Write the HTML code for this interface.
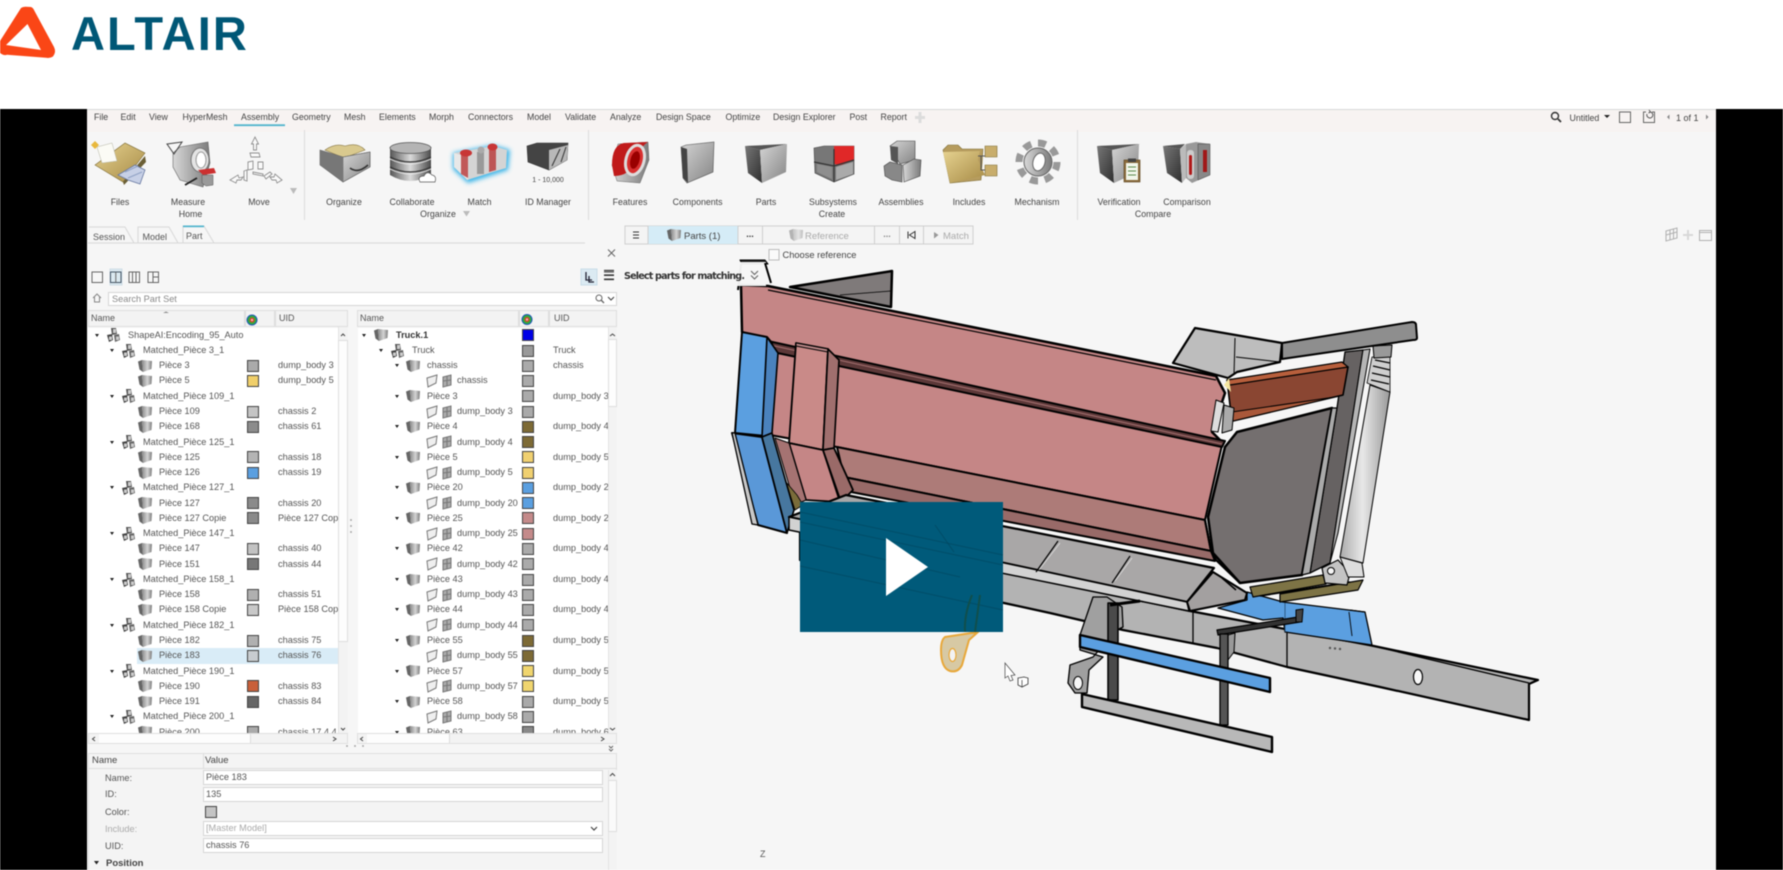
<!DOCTYPE html>
<html><head><meta charset="utf-8">
<style>
html,body{margin:0;padding:0;width:1783px;height:870px;overflow:hidden;background:#fff}
*{box-sizing:border-box}
body{font-family:"Liberation Sans",sans-serif;position:relative}
.abs{position:absolute}
#app{position:absolute;left:0;top:109px;width:1783px;height:761px;background:#000;overflow:hidden}
#inner{position:absolute;left:87px;top:0;width:1629px;height:761px;background:#f6f6f6;border-top:1px solid #d8d8d8}
#fx{position:absolute;left:0;top:0;width:1783px;height:870px;filter:blur(.4px)}
svg text{font-family:"Liberation Sans",sans-serif}
.m text{font-size:8.8px;fill:#444}
.lb text{font-size:8.8px;fill:#444;text-anchor:middle}
.hd{position:absolute;background:#f3f3f3;border:1px solid #dedede;font-size:9px;color:#555;line-height:15px;padding-left:2px;height:17px;top:310px}
.tree{position:absolute;top:327.67px;height:405px;background:#fff;overflow:hidden}
.r{position:relative;height:15.27px;font-size:9.2px;line-height:15.27px;color:#555;white-space:nowrap}
.r svg{position:absolute;width:14px;height:14px;top:.6px}
.r b{position:absolute;font-weight:normal;top:0}
.r s{position:absolute;width:12px;height:12px;top:1.6px;border:1px solid #444;text-decoration:none}
.r u{position:absolute;text-decoration:none;top:0;overflow:hidden}
.r.a::before{content:"";position:absolute;top:6px;border-left:2.5px solid transparent;border-right:2.5px solid transparent;border-top:3.5px solid #222}
#lt{left:88px;width:250px}
#lt .l0::before{left:7px}#lt .l0 svg{left:19px}#lt .l0 b{left:40px}
#lt .l1::before{left:22px}#lt .l1 svg{left:34px}#lt .l1 b{left:55px}
#lt .l2 svg{left:50px}#lt .l2 b{left:71px}
#lt s{left:159px}#lt u{left:190px}
#lt .sel{background:linear-gradient(90deg,#fff 49px,#d9ecf7 49px)}
#rt{left:358px;width:250px}
#rt .l0::before{left:4px}#rt .l0 svg{left:16px}#rt .l0 b{left:38px;font-weight:bold;color:#333}
#rt .l1::before{left:21px}#rt .l1 svg{left:33px}#rt .l1 b{left:54px}
#rt .l2::before{left:37px}#rt .l2 svg{left:48px}#rt .l2 b{left:69px}
#rt .l3 svg.p1{left:67px}#rt .l3 svg.p2{left:82px}#rt .l3 b{left:99px}
#rt s{left:164px}#rt u{left:195px;width:55px}
.fld{position:absolute;left:203px;width:400px;height:15px;background:#fff;border:1px solid #d6d6d6;font-size:9.2px;line-height:13px;padding-left:2px;color:#555}
.pl{position:absolute;left:105px;font-size:9.2px;color:#555}
</style></head>
<body>
<div id="fx">
<svg class="abs" style="left:0;top:0" width="260" height="70" viewBox="0 0 260 70">
<path fill="#fa4616" fill-rule="evenodd" d="M21 8Q23 6.500 26 6.800L31 7Q33 7.500 34.500 11L54 47Q56.500 52 53 56.500Q50 58.500 46 57.800L7 54.800Q4 56 0 53L0 41ZM27.500 24L6 45L41 50Z"/>
<text x="71" y="50" font-size="47" font-weight="bold" fill="#005776" letter-spacing="2.1">ALTAIR</text>
</svg>
<div id="app">
<div id="inner"></div>
</div>
<svg class="abs" style="left:0;top:0" width="1783" height="870" viewBox="0 0 1783 870">
<defs>
<linearGradient id="g1" x1="0" x2="1" y1="0" y2="0"><stop offset="0" stop-color="#d8d8d8"/><stop offset="1" stop-color="#7a7a7a"/></linearGradient>
<linearGradient id="g2" x1="0" x2="1" y1="0" y2="1"><stop offset="0" stop-color="#777"/><stop offset="1" stop-color="#2e2e2e"/></linearGradient>
<linearGradient id="g3" x1="0" x2="1" y1="0" y2="1"><stop offset="0" stop-color="#d4d4d4"/><stop offset="1" stop-color="#858585"/></linearGradient>
<linearGradient id="g4" x1="0" x2="1" y1="0" y2="0"><stop offset="0" stop-color="#555"/><stop offset=".5" stop-color="#dadada"/><stop offset="1" stop-color="#4a4a4a"/></linearGradient>
<linearGradient id="gc" x1="0" x2="1" y1="0" y2="0"><stop offset="0" stop-color="#8a8a8a"/><stop offset=".55" stop-color="#d4d4d4"/><stop offset="1" stop-color="#7c7c7c"/></linearGradient>
<linearGradient id="cyl" x1="0" x2="1" y1="0" y2="0"><stop offset="0" stop-color="#aaa"/><stop offset=".45" stop-color="#e8e8e8"/><stop offset="1" stop-color="#999"/></linearGradient>
<linearGradient id="gold" x1="0" x2="1" y1="0" y2="1"><stop offset="0" stop-color="#e6d290"/><stop offset="1" stop-color="#a68a45"/></linearGradient>
<radialGradient id="wheel"><stop offset="0" stop-color="#fff"/><stop offset=".3" stop-color="#e03030"/><stop offset=".6" stop-color="#28c028"/><stop offset="1" stop-color="#2040d0"/></radialGradient>
<filter id="glow" x="-30%" y="-30%" width="160%" height="160%"><feGaussianBlur stdDeviation="2.500"/></filter>
<symbol id="cube" viewBox="0 0 14 14"><path fill="#666" d="M0 2.500L4 1L5 13L1.500 10.500Z"/><path fill="url(#gc)" d="M4 1L14 2L13.500 10L5 13Z"/></symbol>
<symbol id="asm" viewBox="0 0 14 14"><path fill="#555" d="M4 0L9 0L10 6L5 7Z"/><path fill="#444" d="M0 7L5 6L6 12L2 14Z"/><path fill="#666" d="M7 7L12 6L13 12L8 14Z"/><path fill="#ccc" d="M6 1H9V5H6ZM2 8.500H5V12H2ZM9 8.500H12V12H9Z"/></symbol>
<symbol id="p1" viewBox="0 0 14 14"><path fill="#efefef" stroke="#777" d="M2 4L12 1L11 9L3 13Z"/></symbol>
<symbol id="p2" viewBox="0 0 14 14"><path fill="#aaa" stroke="#777" d="M3 3L11 1V11L3 13Z"/><path stroke="#777" fill="none" d="M3 7L11 6M7 2V12"/></symbol>
</defs>

<!-- menu -->
<rect x="87" y="110" width="1629" height="22" fill="#f7f3f2"/>
<rect x="234" y="124.300" width="51" height="1.800" fill="#4fb3cc"/>
<g class="m">
<text x="94" y="120">File</text><text x="120.500" y="120">Edit</text><text x="149" y="120">View</text><text x="182.500" y="120">HyperMesh</text><text x="241" y="120">Assembly</text><text x="292" y="120">Geometry</text><text x="344" y="120">Mesh</text><text x="379" y="120">Elements</text><text x="429" y="120">Morph</text><text x="468" y="120">Connectors</text><text x="527" y="120">Model</text><text x="565" y="120">Validate</text><text x="610" y="120">Analyze</text><text x="656" y="120">Design Space</text><text x="725.500" y="120">Optimize</text><text x="773" y="120">Design Explorer</text><text x="849.500" y="120">Post</text><text x="880.500" y="120">Report</text>
</g>
<path d="M920 112V123M915 117.500H925" stroke="#dcdcdc" stroke-width="3"/>
<!-- right menu -->
<circle cx="1555" cy="116" r="3.500" fill="none" stroke="#333" stroke-width="1.400"/><path d="M1558 119L1561 122" stroke="#333" stroke-width="1.800"/>
<text x="1569.500" y="121" font-size="8.800" fill="#444">Untitled</text>
<path d="M1604 115H1610L1607 118Z" fill="#222"/>
<rect x="1619.500" y="112" width="11" height="10.500" fill="none" stroke="#666"/>
<path d="M1646 112H1643.500V122.500H1654.500V112H1652" fill="none" stroke="#666"/><path d="M1647 114A3 3 0 1 0 1650 112M1649 110L1650.500 112L1648.500 113" fill="none" stroke="#555"/>
<path d="M1669.500 114.500V119.500L1667 117Z" fill="#888"/>
<text x="1676" y="121" font-size="9" fill="#444">1 of 1</text>
<path d="M1706 114.500V119.500L1708.500 117Z" fill="#888"/>

<!-- separators -->
<path d="M304.500 130V220M588.500 130V220M1077.500 130V220" stroke="#dcdcdc"/>

<!-- Files -->
<path d="M95 165L125 143L145 153L123 182Z" fill="url(#gold)" stroke="#7d6c34" stroke-width=".6"/>
<path d="M123 182L145 156L146 162L124 185Z" fill="#6b5f35"/>
<path d="M97 147L112 143L117 161L102 163Z" fill="#fbfbf5" stroke="#b5b5a5" stroke-width=".5"/>
<path d="M95 141L99 145L95 149L91 145Z" fill="#e8b83c"/>
<path d="M118 175L135 165L145 170L140 184L128 180Z" fill="#c7d0e6" stroke="#6677a0" stroke-width=".8"/>
<path d="M125 172L138 166M128 178L142 172" stroke="#8fa0c4" stroke-width="1"/>
<!-- Measure -->
<path d="M173 153L180 147L208 142L210 163L203 187L180 180L173 167Z" fill="url(#g1)" stroke="#666" stroke-width=".6"/>
<path d="M167 144L182 142L174 154Z" fill="none" stroke="#444"/>
<ellipse cx="200" cy="160" rx="9" ry="12" fill="#e4e4e4" stroke="#777"/><ellipse cx="201" cy="160" rx="5" ry="8" fill="#fff" stroke="#999"/>
<path d="M198 170L214 168L216 173L203 175Z" fill="#cc3030"/><path d="M202 175H213V185L206 186L202 183Z" fill="#9a9a9a" stroke="#555" stroke-width=".5"/>
<path d="M185 185L197 178" stroke="#222" stroke-width="1.800"/>
<!-- Move -->
<g fill="#fafafa" stroke="#8e8e8e" stroke-width=".9">
<path d="M253.500 150V144H251.500L255 137L258.500 144H256.500V150Z"/>
<path d="M250 153H259L260 157H251Z"/><path d="M258 162H263V169H258Z"/><path d="M248 162L253 161V169L248 170Z"/>
<path d="M244 171L247 170L247 181L244 180Z"/><path d="M253 172L263 174L263 176L253 174Z"/><path d="M264 176L270 172L272 174L266 179Z"/>
<path d="M230 180L238 175L239 178L243 177L241 180L237 180L236 183Z"/><path d="M282 180L275 174L274 177L270 177L272 180L276 180L277 183Z"/>
</g>
<path d="M290 188H297L293.500 194Z" fill="#bbb"/>
<!-- Organize -->
<path d="M325 150Q335 143 345 146Q358 142 365 150L344 158Z" fill="#d9c98e" stroke="#8a7a4a" stroke-width=".6"/>
<path d="M320 150L343 157L370 152L370 167L343 182L320 165Z" fill="url(#g1)" stroke="#555" stroke-width=".6"/>
<path d="M343 157L370 152V167L343 182Z" fill="url(#g3)" stroke="#555" stroke-width=".5"/>
<path d="M320 150L343 157V182L320 165Z" fill="#777"/>
<path d="M350 168Q358 174 368 165" fill="none" stroke="#333" stroke-width="1.600"/>
<!-- Collaborate -->
<path d="M390 148V175Q410 187 431 175V148Z" fill="url(#g4)"/>
<ellipse cx="410.500" cy="148" rx="20.500" ry="5.500" fill="#b4b4b4" stroke="#555" stroke-width=".8"/>
<path d="M390 157Q410 167 431 157M390 167Q410 177 431 167" fill="none" stroke="#333" stroke-width="1.200"/>
<path d="M390 159Q410 169 431 159M390 169Q410 179 431 169" fill="none" stroke="#eee" stroke-width=".8"/>
<path d="M420 182Q417 176 424 176Q427 170 432 175Q437 176 435 182Z" fill="#fff" stroke="#555" stroke-width=".7"/>
<!-- Match -->
<path d="M453 153L493 145L510 150L508 170L468 183L453 169Z" fill="#38b4e8" filter="url(#glow)"/>
<path d="M454 153L493 146L507 150L506 168L467 180L454 167Z" fill="#d4d4d4"/>
<path d="M454 153L468 157V180L454 167Z" fill="#e8e8e8"/>
<path d="M461 155H468V178L461 174ZM489 149H496V170L489 172Z" fill="#b73535" opacity=".8"/>
<path d="M477 152H484V174H477Z" fill="#999"/>
<ellipse cx="466" cy="153" rx="6" ry="3.500" fill="#c83636"/><ellipse cx="492.500" cy="147" rx="5" ry="3.500" fill="#c83636"/><circle cx="481" cy="150" r="3.500" fill="#aaa"/>
<!-- ID -->
<path d="M527 146L537 143H568L567 160L549 170L528 162Z" fill="#444" stroke="#333" stroke-width=".6"/>
<path d="M549 150L568 145L567 160L549 170Z" fill="#b8b8b8"/>
<path d="M552 166L560 149M561 162L566 147" stroke="#333"/>
<text x="548" y="182" font-size="7" fill="#444" text-anchor="middle">1 - 10,000</text>

<!-- Features -->
<path d="M618 144L648 142L649 160L640 183L617 181L612 165Z" fill="url(#g1)" stroke="#666" stroke-width=".5"/>
<path d="M612 165Q612 145 624 143L648 142Q640 147 636 160Q630 176 614 176Z" fill="#c01a1a"/>
<ellipse cx="635" cy="160" rx="9" ry="15" transform="rotate(15 635 160)" fill="#d83030" stroke="#ddd" stroke-width="3"/><ellipse cx="635" cy="160" rx="4.500" ry="9" transform="rotate(15 635 160)" fill="#900"/>
<!-- Components -->
<path d="M681 147L686 145L714 142L713 172L687 183L683 178Z" fill="url(#g3)" stroke="#555" stroke-width=".6"/>
<path d="M681 147L687 149L688 183L683 178Z" fill="#444"/>
<!-- Parts -->
<path d="M745 146L760 150L762 183L748 173Z" fill="url(#g2)"/>
<path d="M745 146L787 144L760 150Z" fill="#555"/>
<path d="M760 150L787 144L786 172L762 183Z" fill="url(#g3)"/>
<!-- Subsystems -->
<path d="M814 148L824 146H854L854 174L834 182L815 173Z" fill="#777" stroke="#444" stroke-width=".6"/>
<path d="M834 146H854V160L841 165L834 164Z" fill="#e02828"/>
<path d="M836 167L853 162V174L836 180Z" fill="#aaa"/><path d="M817 164L832 167V179L817 172Z" fill="#8e8e8e"/>
<path d="M834 149V182M814 162L834 166L854 160" stroke="#333" stroke-width="1.200" fill="none"/>
<!-- Assemblies -->
<path d="M890 146L897 141H915L915 160L900 164Z" fill="url(#g3)" stroke="#444" stroke-width=".6"/><path d="M890 146L898 147V164L891 160Z" fill="#555"/>
<path d="M884 166L890 162L902 165V182L892 180L885 176Z" fill="#888" stroke="#444" stroke-width=".6"/>
<path d="M903 165L914 159L921 160L920 176L904 182Z" fill="url(#g1)" stroke="#444" stroke-width=".6"/>
<!-- Includes -->
<path d="M943 150L948 145L958 145L962 149L983 149L981 180L950 183Z" fill="#b69c5e" stroke="#7d6c34" stroke-width=".6"/>
<path d="M943 152L980 151L978 160L985 175L950 183Z" fill="url(#gold)"/>
<path d="M985 146H997V157H985ZM985 165H997V176H985Z" fill="#c8ad6c" stroke="#7d6c34" stroke-width=".6"/><path d="M978 156H985M981 156V170H985" stroke="#555" fill="none"/>
<!-- Mechanism -->
<circle cx="1038" cy="162" r="14" fill="url(#g1)" stroke="#666" stroke-width="1"/>
<circle cx="1038" cy="162" r="19" fill="none" stroke="#999" stroke-width="7" stroke-dasharray="8 6.900"/>
<ellipse cx="1039" cy="162" rx="6" ry="9" fill="#fff" stroke="#666" transform="rotate(15 1039 162)"/>
<!-- Verification -->
<path d="M1097 146L1112 150L1114 183L1100 173Z" fill="url(#g2)"/>
<path d="M1097 146L1140 144L1112 150Z" fill="#555"/>
<path d="M1112 150L1139 144L1138 172L1114 183Z" fill="url(#g3)"/>
<rect x="1124" y="160" width="16" height="22" fill="#8a6a3a" stroke="#5a4420" stroke-width=".6"/><rect x="1126" y="163" width="12" height="17" fill="#f2f6ea"/><rect x="1128" y="158.500" width="8" height="3.500" fill="#444"/>
<path d="M1128 167H1136M1128 171H1136M1128 175H1136" stroke="#5a8a4a"/>
<!-- Comparison -->
<path d="M1163 146L1180 149L1182 183L1167 173Z" fill="url(#g2)"/>
<path d="M1163 146L1185 144L1180 149Z" fill="#555"/>
<path d="M1180 149L1186 144V178L1182 183Z" fill="#bbb"/>
<path d="M1186 144L1196 142L1210 144V175L1192 183L1186 178Z" fill="#999"/>
<rect x="1187" y="150" width="7" height="29" rx="3" fill="#ccc"/><rect x="1189" y="155" width="3" height="20" rx="1.500" fill="#b01818"/>
<path d="M1198 144H1210V175L1198 180Z" fill="#888" stroke="#444" stroke-width=".5"/><rect x="1203" y="150" width="4" height="22" fill="#a01818"/>

<g class="lb">
<text x="120" y="205">Files</text><text x="188" y="205">Measure</text><text x="190.500" y="217" font-size="9.500">Home</text><text x="259" y="205">Move</text><text x="344" y="205">Organize</text><text x="412" y="205">Collaborate</text><text x="479.500" y="205">Match</text><text x="548" y="205">ID Manager</text><text x="438" y="217">Organize</text><text x="630" y="205">Features</text><text x="697.600" y="205">Components</text><text x="766" y="205">Parts</text><text x="833" y="205">Subsystems</text><text x="832" y="217">Create</text><text x="901" y="205">Assemblies</text><text x="969" y="205">Includes</text><text x="1037" y="205">Mechanism</text><text x="1119" y="205">Verification</text><text x="1187" y="205">Comparison</text><text x="1153" y="217">Compare</text>
</g>
<path d="M463 211H470L466.500 216.500Z" fill="#bbb"/>

<!-- tabs -->
<path d="M88 243H585" stroke="#d8d8d8"/>
<path d="M89 227H125L134 243M138 243V227H169L178 243M183 243V226H204L214 243" fill="none" stroke="#d8d8d8"/>
<rect x="183" y="225.500" width="21" height="1.700" fill="#4fb3cc"/>
<g font-size="9" fill="#555"><text x="93" y="240">Session</text><text x="142.500" y="240">Model</text><text x="186" y="239">Part</text></g>

<!-- panel toggles -->
<rect x="110" y="269" width="12" height="16" fill="#dbe9f0" stroke="#cfdde6"/>
<g fill="none" stroke="#666"><rect x="92" y="272" width="10.500" height="10.500"/><rect x="110.500" y="272" width="10.500" height="10.500" stroke="#456"/><path d="M115.800 272V282.500"/><rect x="129" y="272" width="10.500" height="10.500"/><path d="M132.500 272V282.500M136 272V282.500"/><rect x="148" y="272" width="10.500" height="10.500"/><path d="M153 272V282.500M153 277H158.500"/></g>
<rect x="581" y="269" width="16" height="16" fill="#dbeaf2" stroke="#c8dce8"/>
<path d="M586 272V280H592M589 276V282H594" fill="none" stroke="#223" stroke-width="1.300"/>
<path d="M604 272H614M604 275.500H614M604 279H614" stroke="#444"/>

<!-- TOOLBAR -->
<rect x="625" y="226" width="348" height="18" fill="#f4f4f4" stroke="#cfcfcf"/>
<rect x="648" y="226" width="90" height="18" fill="#d5ecf7"/>
<path d="M648 226V244M738 226V244M762.500 226V244M874.500 226V244M899.500 226V244M923.500 226V244" stroke="#cfcfcf"/>
<path d="M633 232H639M633 235H639M633 238H639" stroke="#333" stroke-width="1.100"/>
<use href="#cube" x="667" y="228" width="14" height="14"/>
<text x="684" y="239" font-size="9.500" fill="#444">Parts (1)</text>
<text x="750" y="237" font-size="9" fill="#333" text-anchor="middle" font-weight="bold">...</text>
<g opacity=".45"><use href="#cube" x="789" y="228" width="14" height="14"/></g>
<text x="805" y="239" font-size="9.500" fill="#aaa">Reference</text>
<text x="887" y="237" font-size="9" fill="#888" text-anchor="middle" font-weight="bold">...</text>
<path d="M908 231.500V238.500M915 231.500L909.500 235L915 238.500Z" fill="none" stroke="#333"/>
<path d="M934 232V238.500L938.500 235Z" fill="#999"/><text x="943" y="239" font-size="9.500" fill="#aaa">Match</text>
<path d="M608 249.500L615 256.500M615 249.500L608 256.500" stroke="#666"/>
<rect x="769" y="249.500" width="10" height="10.500" fill="#fafafa" stroke="#bbb"/>
<text x="782.500" y="258" font-size="9.300" fill="#444">Choose reference</text>

<!-- view icons -->
<g fill="none" stroke="#b0b0b0"><path d="M1666 231L1677 228V238L1666 241ZM1670 230V240M1673.500 229V239M1666 235L1677 232"/><path d="M1688 230V240M1683 235H1693" stroke="#d8d8d8" stroke-width="2"/><rect x="1699.500" y="230.500" width="12" height="10"/><path d="M1699.500 232.500H1711.500"/></g>

<!-- TRUCK -->
<g stroke="#000" stroke-linejoin="round">
<!-- back wall -->
<path d="M790 287L892 271L891 307L835 296Z" fill="#7f7a7a" stroke-width="2.500"/>
<path d="M840 295L891 291" stroke-width=".8" fill="none"/>
<path d="M740 260H765L768 264H742Z" fill="#222" stroke-width="1"/>
<path d="M741 264L738 290" stroke-width="2"/>
<!-- side wall -->
<path d="M1225 447L1208 517L1213 553L1240 583L1302 575L1332 408L1237 432Z" fill="#746f6f" stroke-width="2.500"/>
<!-- frame -->
<path d="M1345 352L1363 350L1330 563L1310 573L1337 408Z" fill="#666262" stroke-width="1.300"/>
<path d="M1332 408L1337 408L1310 573L1302 575Z" fill="#aaa" stroke-width="1.200"/>
<path d="M1363 350L1370 349L1338 533L1330 563Z" fill="#b5b5b5" stroke-width="1"/>
<!-- cylinder -->
<path d="M1370 385L1390 392L1363 563L1340 557Z" fill="url(#cyl)" stroke-width="1"/>
<path d="M1372 357L1390 357L1390 392L1367 383Z" fill="#cfcfcf" stroke-width=".8"/>
<path d="M1371 380L1389 384M1372 373L1390 377M1373 366L1390 370M1375 360L1390 363" stroke-width="1.200"/>
<path d="M1373 346L1392 345L1391 357L1374 358Z" fill="#999" stroke-width="1"/>
<!-- top back gray -->
<path d="M1173 363L1195 328L1282 343L1280 362L1237 372L1228 378Z" fill="#bdbdbd" stroke-width="2.200"/>
<path d="M1235 338L1234 375M1236 357L1280 362" stroke-width="1" fill="none"/>
<!-- arm -->
<path d="M1282 343L1412 322Q1416 322 1416 325L1417 338Q1417 340 1413 340L1282 359Z" fill="#8e8e8e" stroke-width="2"/>
<!-- brown -->
<path d="M1227 380L1348 367L1343 395L1233 421L1230 405Z" fill="#8a4632" stroke-width="1.600"/>
<path d="M1227 380L1342 362L1348 367L1230 385Z" fill="#b85f3c" stroke-width="1.200"/>
<path d="M1232 412L1335 397L1343 395L1233 421Z" fill="#a9583a" stroke-width="1"/>
<!-- pink upper -->
<path d="M741 285L768 286L1216 376L1225 393L1212 432L1222 442L768 342L742 332Z" fill="#c58686" stroke-width="2.500"/>
<path d="M768 290L1216 380" stroke-width="1.200" fill="none"/>
<!-- brackets -->
<path d="M1216 400L1224 403L1218 432L1211 431Z" fill="#ddd" stroke-width="1"/>
<path d="M1224 405L1234 408L1232 430L1222 433Z" fill="#aaa" stroke-width="1"/>
<!-- lower panel -->
<path d="M770 345L1222 445L1205 520L837 447L770 435Z" fill="#c58686" stroke-width="2"/>
<!-- rail -->
<path d="M768 341L1225 441L1222 447L768 351Z" fill="#5c3838" stroke-width="2"/>
<path d="M770 345L1222 444" stroke="#a47070" stroke-width="1"/>
<!-- bands -->
<path d="M837 447L1205 520L1211 551L844 477Z" fill="#ad7b78" stroke-width="2"/>
<path d="M844 477L1211 551L1215 561L851 492Z" fill="#986a68" stroke-width="2"/>
<path d="M1205 520L1211 551L1216 560L1240 583" fill="none" stroke-width="2.200"/>
<!-- column -->
<path d="M796 343L828 349L823 450L789 443Z" fill="#c98a88" stroke-width="1.800"/>
<path d="M796 343L828 349L828 352L796 346Z" fill="#b88" stroke-width="1"/>
<path d="M828 349L839 360L834 448L823 450Z" fill="#a06f6e" stroke-width="1.600"/>
<path d="M789 443L823 450L840 502L806 500Z" fill="#c58686" stroke-width="1.800"/>
<path d="M823 450L834 448L853 490L841 502Z" fill="#9a6a68" stroke-width="1.800"/>
<path d="M775 438L789 443L806 500L795 505Z" fill="#a57372" stroke-width="1"/>
<path d="M786 482L797 495L803 505L795 510Z" fill="#7a6c3a" stroke-width=".8"/>
<!-- blue -->
<path d="M742 332L767 337L772 343L766 436L735 433Z" fill="#5b9fe0" stroke-width="2"/>
<path d="M767 337L778 353L772 433L762 437Z" fill="#4a82bd" stroke-width="1.600"/>
<path d="M732 433L762 437L787 533L758 525Z" fill="#5a98d8" stroke-width="2"/>
<path d="M762 437L772 433L794 510L787 533Z" fill="#47779f" stroke-width="1.600"/>
<path d="M732 433L735 433L758 525L752 524Z" fill="#c8c8c8" stroke-width="1.300"/>
<!-- chassis beam (behind floor) -->
<path d="M800 530L1190 611L1369 645L1538 680L1529 684L1529 720L1380 687L1287 667L1217 648L1123 630L1050 613L1004 603L800 560Z" fill="#b3b3b3" stroke-width="2.200"/>
<path d="M1193 610V643M1287 633V667M1369 645L1529 683" stroke-width="1.300" fill="none"/>
<!-- floor -->
<path d="M846 495L1214 568L1187 602L789 517Z" fill="#a9a7a7" stroke-width="2.200"/>
<path d="M789 517L1187 602L1189 611L789 530Z" fill="#d2d2d2" stroke-width="1.500"/>
<path d="M1036 572L1058 541M1112 583L1130 556" stroke-width="1.200" fill="none"/>
<path d="M1039 570L1060 543M1115 581L1132 558" stroke="#dedede" stroke-width=".7" fill="none"/>
<!-- blue right -->
<path d="M1218 608L1247 600L1247 592L1283 602L1365 612L1372 645L1285 632L1283 618L1263 620Z" fill="#5b9fe0" stroke-width="1.300"/>
<path d="M1350 610L1365 612M1349 612L1352 636" fill="none" stroke-width=".9"/>
<path d="M1285 603V632" stroke="#224a70" stroke-width=".8"/>
<path d="M1187 602L1213 572L1247 593L1245 600L1190 611Z" fill="#a3a0a0" stroke-width="2"/>
<path d="M1222 578L1236 590" stroke-width="1.500" fill="none"/>
<!-- olive -->
<path d="M1250 587L1323 575L1326 584L1253 597Z" fill="#7d7345" stroke-width="1.200"/>
<path d="M1280 594L1363 580L1358 590L1280 602Z" fill="#7d7345" stroke-width="1.200"/>
<path d="M1260 596L1350 582" stroke-width="1.500" fill="none"/>
<path d="M1322 568L1338 560L1350 573L1347 585L1325 583Z" fill="#c4c4c4" stroke-width="1.200"/>
<circle cx="1331" cy="571" r="3.500" fill="#f5f5f5" stroke-width="1"/>
<path d="M1340 557L1362 563L1364 577L1348 577Z" fill="#ddd" stroke-width="1"/>
<!-- right bracket -->
<path d="M1228 635L1235 633L1234 652L1228 660Z" fill="#999" stroke-width="1"/>
<path d="M1217 630L1298 617L1300 622L1218 635Z" fill="#333" stroke-width="1.200"/>
<path d="M1296 610L1303 609L1302 622L1296 622Z" fill="#444" stroke-width="1"/>
<path d="M1220 634H1228V725H1220Z" fill="#555" stroke-width="1.300"/>
<!-- left bracket + post -->
<path d="M1080 635L1093 597L1107 597L1122 607L1123 627L1117 630L1093 657L1070 665L1068 683L1075 693L1087 693L1089 670L1103 657L1080 650Z" fill="#a0a0a0" stroke-width="1.300"/>
<path d="M1108 603H1118V700H1108Z" fill="#4a4a4a" stroke-width="1.500"/>
<path d="M1110 605L1140 601" stroke-width="3" fill="none"/>
<ellipse cx="1078" cy="683" rx="4.500" ry="6.500" fill="#f5f5f5" stroke-width="1"/>
<!-- bars -->
<path d="M1080 635L1270 678L1270 692L1080 647Z" fill="#5b9fe0" stroke-width="2.400"/>
<path d="M1082 694L1272 737L1272 752L1082 707Z" fill="#b8b8b8" stroke-width="2.400"/>
<ellipse cx="1418" cy="677" rx="4.500" ry="7.500" fill="#f8f8f8" stroke-width="1.200"/>
</g>
<g fill="#555"><circle cx="1330" cy="648" r="1.200"/><circle cx="1335" cy="648.500" r="1.200"/><circle cx="1340" cy="649" r="1.200"/></g>
<path d="M1224 385L1229 378L1231 392Z" fill="#f5e6a0"/>
<!-- yellow -->
<path d="M945 637L978 632L969 640L962 665Q958 673 950 671Q941 668 941 650Q941 640 945 637Z" fill="#d7c9a4" stroke="#e8a83a" stroke-width="2"/>
<ellipse cx="952.500" cy="655" rx="3.500" ry="6.500" fill="#f3f3f3" stroke="#e8a83a" stroke-width="1.200"/>
<!-- cursor -->
<path d="M1005 663L1015 675L1011 675.500L1013 680L1010 681L1008 676L1005 678Z" fill="#fff" stroke="#444" stroke-width=".7"/>
<path d="M1018 678L1024 677L1028 678V684L1022 687L1018 685Z" fill="#fff" stroke="#333" stroke-width=".8"/><path d="M1022 680V687" stroke="#333" stroke-width=".7"/>
<text x="760" y="857" font-size="9" fill="#555">Z</text>

<!-- select box -->
<rect x="618" y="262" width="148" height="24" fill="#f6f6f6" opacity=".96"/>
<path d="M765 263L771 283" stroke="#000" stroke-width="2"/>
<path d="M604 270.500H614M604 275H614M604 279.500H614" stroke="#333" stroke-width="1.200"/>
<text x="624" y="279" font-size="9.600" font-weight="bold" fill="#333" style="font-family:'DejaVu Sans',sans-serif" textLength="121">Select parts for matching.</text>
<path d="M751 271L754.500 274.500L758 271M751 275.500L754.500 279L758 275.500" fill="none" stroke="#666" stroke-width="1.100"/>

<!-- PLAY -->
<rect x="800" y="502" width="203" height="130" fill="#005a7a"/>
<g stroke="#00465f" fill="none"><path d="M800 512L1003 555M800 522L1003 565M800 540L960 577M1003 610L800 566" opacity=".65"/><path d="M972 595Q964 615 965 632M980 595L975 632" stroke="#104f4c" stroke-width="2"/><path d="M935 525L954 552" opacity=".7"/></g>
<path d="M886 538L928 567L886 596Z" fill="#fff"/>
</svg>

<!-- search -->
<div class="abs" style="left:108px;top:292px;width:509px;height:14px;background:#fff;border:1px solid #d6d6d6;font-size:9.200px;line-height:12px;padding-left:3px;color:#888">Search Part Set</div>
<svg class="abs" style="left:92px;top:293px" width="10" height="10"><path d="M1 5L5 1L9 5M2.500 4V9H7.500V4" fill="none" stroke="#888"/></svg>
<svg class="abs" style="left:594px;top:293px" width="24" height="12"><circle cx="5" cy="5" r="3" fill="none" stroke="#666"/><path d="M7 7L10 10" stroke="#666" stroke-width="1.300"/><path d="M14 4L17 7L20 4" fill="none" stroke="#444" stroke-width="1.100"/></svg>

<!-- tree panels -->
<div class="hd" style="left:88px;width:157px">Name</div><div class="hd" style="left:245px;width:30px"></div><div class="hd" style="left:275px;width:73px;padding-left:3px">UID</div>
<div class="hd" style="left:357px;width:162px">Name</div><div class="hd" style="left:519px;width:30px"></div><div class="hd" style="left:549px;width:68px;padding-left:4px">UID</div>
<svg class="abs" style="left:160px;top:310px;overflow:visible" width="460" height="17"><path d="M3 3L6 1.500L9 3Z" fill="#888"/>
<circle cx="92" cy="10" r="5.500" fill="url(#wheel)"/><circle cx="367" cy="9.500" r="5.500" fill="url(#wheel)"/></svg>

<div class="tree" id="lt">
<div class="r a l0"><svg><use href="#asm"/></svg><b>ShapeAI:Encoding_95_Auto</b></div>
<div class="r a l1"><svg><use href="#asm"/></svg><b>Matched_Pièce 3_1</b></div>
<div class="r l2"><svg><use href="#cube"/></svg><b>Pièce 3</b><s style="background:#aaa"></s><u>dump_body 3</u></div>
<div class="r l2"><svg><use href="#cube"/></svg><b>Pièce 5</b><s style="background:#f0cf6a"></s><u>dump_body 5</u></div>
<div class="r a l1"><svg><use href="#asm"/></svg><b>Matched_Pièce 109_1</b></div>
<div class="r l2"><svg><use href="#cube"/></svg><b>Pièce 109</b><s style="background:#c4c4c4"></s><u>chassis 2</u></div>
<div class="r l2"><svg><use href="#cube"/></svg><b>Pièce 168</b><s style="background:#8c8c8c"></s><u>chassis 61</u></div>
<div class="r a l1"><svg><use href="#asm"/></svg><b>Matched_Pièce 125_1</b></div>
<div class="r l2"><svg><use href="#cube"/></svg><b>Pièce 125</b><s style="background:#b4b4b4"></s><u>chassis 18</u></div>
<div class="r l2"><svg><use href="#cube"/></svg><b>Pièce 126</b><s style="background:#5a9fe0"></s><u>chassis 19</u></div>
<div class="r a l1"><svg><use href="#asm"/></svg><b>Matched_Pièce 127_1</b></div>
<div class="r l2"><svg><use href="#cube"/></svg><b>Pièce 127</b><s style="background:#8a8a8a"></s><u>chassis 20</u></div>
<div class="r l2"><svg><use href="#cube"/></svg><b>Pièce 127 Copie</b><s style="background:#8a8a8a"></s><u>Pièce 127 Copie</u></div>
<div class="r a l1"><svg><use href="#asm"/></svg><b>Matched_Pièce 147_1</b></div>
<div class="r l2"><svg><use href="#cube"/></svg><b>Pièce 147</b><s style="background:#c2c2c2"></s><u>chassis 40</u></div>
<div class="r l2"><svg><use href="#cube"/></svg><b>Pièce 151</b><s style="background:#777"></s><u>chassis 44</u></div>
<div class="r a l1"><svg><use href="#asm"/></svg><b>Matched_Pièce 158_1</b></div>
<div class="r l2"><svg><use href="#cube"/></svg><b>Pièce 158</b><s style="background:#b0b0b0"></s><u>chassis 51</u></div>
<div class="r l2"><svg><use href="#cube"/></svg><b>Pièce 158 Copie</b><s style="background:#c8c8c8"></s><u>Pièce 158 Copie</u></div>
<div class="r a l1"><svg><use href="#asm"/></svg><b>Matched_Pièce 182_1</b></div>
<div class="r l2"><svg><use href="#cube"/></svg><b>Pièce 182</b><s style="background:#b0b0b0"></s><u>chassis 75</u></div>
<div class="r l2 sel"><svg><use href="#cube"/></svg><b>Pièce 183</b><s style="background:#c8ccd0"></s><u>chassis 76</u></div>
<div class="r a l1"><svg><use href="#asm"/></svg><b>Matched_Pièce 190_1</b></div>
<div class="r l2"><svg><use href="#cube"/></svg><b>Pièce 190</b><s style="background:#c9603a"></s><u>chassis 83</u></div>
<div class="r l2"><svg><use href="#cube"/></svg><b>Pièce 191</b><s style="background:#666"></s><u>chassis 84</u></div>
<div class="r a l1"><svg><use href="#asm"/></svg><b>Matched_Pièce 200_1</b></div>
<div class="r l2"><svg><use href="#cube"/></svg><b>Pièce 200</b><s style="background:#aaa"></s><u>chassis 17 4 4</u></div>
</div>

<div class="tree" id="rt">
<div class="r a l0"><svg><use href="#cube"/></svg><b>Truck.1</b><s style="background:#0000e6"></s></div>
<div class="r a l1"><svg><use href="#asm"/></svg><b>Truck</b><s style="background:#999"></s><u>Truck</u></div>
<div class="r a l2"><svg><use href="#cube"/></svg><b>chassis</b><s style="background:#aaa"></s><u>chassis</u></div>
<div class="r l3"><svg class="p1"><use href="#p1"/></svg><svg class="p2"><use href="#p2"/></svg><b>chassis</b><s style="background:#aaa"></s></div>
<div class="r a l2"><svg><use href="#cube"/></svg><b>Pièce 3</b><s style="background:#aaa"></s><u>dump_body 3</u></div>
<div class="r l3"><svg class="p1"><use href="#p1"/></svg><svg class="p2"><use href="#p2"/></svg><b>dump_body 3</b><s style="background:#aaa"></s></div>
<div class="r a l2"><svg><use href="#cube"/></svg><b>Pièce 4</b><s style="background:#7d6a35"></s><u>dump_body 4</u></div>
<div class="r l3"><svg class="p1"><use href="#p1"/></svg><svg class="p2"><use href="#p2"/></svg><b>dump_body 4</b><s style="background:#7d6a35"></s></div>
<div class="r a l2"><svg><use href="#cube"/></svg><b>Pièce 5</b><s style="background:#f0d070"></s><u>dump_body 5</u></div>
<div class="r l3"><svg class="p1"><use href="#p1"/></svg><svg class="p2"><use href="#p2"/></svg><b>dump_body 5</b><s style="background:#f0d070"></s></div>
<div class="r a l2"><svg><use href="#cube"/></svg><b>Pièce 20</b><s style="background:#5a9fe0"></s><u>dump_body 20</u></div>
<div class="r l3"><svg class="p1"><use href="#p1"/></svg><svg class="p2"><use href="#p2"/></svg><b>dump_body 20</b><s style="background:#5a9fe0"></s></div>
<div class="r a l2"><svg><use href="#cube"/></svg><b>Pièce 25</b><s style="background:#c48a8a"></s><u>dump_body 25</u></div>
<div class="r l3"><svg class="p1"><use href="#p1"/></svg><svg class="p2"><use href="#p2"/></svg><b>dump_body 25</b><s style="background:#c48a8a"></s></div>
<div class="r a l2"><svg><use href="#cube"/></svg><b>Pièce 42</b><s style="background:#aaa"></s><u>dump_body 42</u></div>
<div class="r l3"><svg class="p1"><use href="#p1"/></svg><svg class="p2"><use href="#p2"/></svg><b>dump_body 42</b><s style="background:#aaa"></s></div>
<div class="r a l2"><svg><use href="#cube"/></svg><b>Pièce 43</b><s style="background:#aaa"></s><u>dump_body 43</u></div>
<div class="r l3"><svg class="p1"><use href="#p1"/></svg><svg class="p2"><use href="#p2"/></svg><b>dump_body 43</b><s style="background:#aaa"></s></div>
<div class="r a l2"><svg><use href="#cube"/></svg><b>Pièce 44</b><s style="background:#aaa"></s><u>dump_body 44</u></div>
<div class="r l3"><svg class="p1"><use href="#p1"/></svg><svg class="p2"><use href="#p2"/></svg><b>dump_body 44</b><s style="background:#aaa"></s></div>
<div class="r a l2"><svg><use href="#cube"/></svg><b>Pièce 55</b><s style="background:#7d6a35"></s><u>dump_body 55</u></div>
<div class="r l3"><svg class="p1"><use href="#p1"/></svg><svg class="p2"><use href="#p2"/></svg><b>dump_body 55</b><s style="background:#7d6a35"></s></div>
<div class="r a l2"><svg><use href="#cube"/></svg><b>Pièce 57</b><s style="background:#f0d56e"></s><u>dump_body 57</u></div>
<div class="r l3"><svg class="p1"><use href="#p1"/></svg><svg class="p2"><use href="#p2"/></svg><b>dump_body 57</b><s style="background:#f0d56e"></s></div>
<div class="r a l2"><svg><use href="#cube"/></svg><b>Pièce 58</b><s style="background:#aaa"></s><u>dump_body 58</u></div>
<div class="r l3"><svg class="p1"><use href="#p1"/></svg><svg class="p2"><use href="#p2"/></svg><b>dump_body 58</b><s style="background:#aaa"></s></div>
<div class="r a l2"><svg><use href="#cube"/></svg><b>Pièce 63</b><s style="background:#888"></s><u>dump_body 63</u></div>
</div>

<!-- scrollbars -->
<div class="abs" style="left:338px;top:327px;width:10px;height:406px;background:#f3f3f3;border-left:1px solid #e4e4e4"></div>
<div class="abs" style="left:338px;top:340px;width:10px;height:302px;background:#fdfdfd;border:1px solid #dedede"></div>
<div class="abs" style="left:608px;top:327px;width:9px;height:406px;background:#f3f3f3;border-left:1px solid #e4e4e4"></div>
<div class="abs" style="left:608px;top:339px;width:9px;height:68px;background:#fdfdfd;border:1px solid #dedede"></div>
<div class="abs" style="left:88px;top:733px;width:260px;height:11px;background:#f3f3f3;border:1px solid #e0e0e0"></div>
<div class="abs" style="left:99px;top:734px;width:152px;height:9px;background:#fdfdfd;border-right:1px solid #ddd"></div>
<div class="abs" style="left:357px;top:733px;width:260px;height:11px;background:#f3f3f3;border:1px solid #e0e0e0"></div>
<div class="abs" style="left:367px;top:734px;width:83px;height:9px;background:#fdfdfd;border-right:1px solid #ddd"></div>
<svg class="abs" style="left:0;top:0;pointer-events:none" width="640" height="870"><g fill="none" stroke="#444" stroke-width="1"><path d="M341 336L343 334L345 336M341 728L343 730L345 728M610 336L612.500 334L615 336M610 728L612.500 730L615 728M95 737L92.500 739L95 741M333 737L336 739L333 741M363 737L360.500 739L363 741M601 737L604 739L601 741"/></g>
<g fill="#999"><circle cx="351" cy="520" r=".9"/><circle cx="351" cy="526" r=".9"/><circle cx="351" cy="532" r=".9"/><circle cx="347" cy="746" r=".9"/><circle cx="355" cy="746" r=".9"/><circle cx="363" cy="746" r=".9"/></g>
<path d="M609 746L611 748L613 746M609 749L611 751L613 749" fill="none" stroke="#666"/></svg>

<!-- properties -->
<div class="abs" style="left:88px;top:753px;width:529px;height:117px;background:#f4f4f4;border-left:1px solid #e0e0e0;border-right:1px solid #e0e0e0;border-top:1px solid #e0e0e0"></div>
<div class="abs" style="left:203px;top:753px;width:1px;height:15px;background:#ddd"></div>
<div class="abs" style="left:88px;top:768px;width:529px;height:1px;background:#ddd"></div>
<div class="abs" style="left:92px;top:755px;font-size:9.500px;color:#444">Name</div>
<div class="abs" style="left:205px;top:755px;font-size:9.500px;color:#444">Value</div>
<div class="pl" style="top:773px">Name:</div><div class="fld" style="top:770px">Pièce 183</div>
<div class="pl" style="top:789px">ID:</div><div class="fld" style="top:787px">135</div>
<div class="pl" style="top:807px">Color:</div><div class="abs" style="left:205px;top:806px;width:12px;height:12px;background:#c4c4c4;border:1px solid #444"></div>
<div class="pl" style="top:824px;color:#aaa">Include:</div><div class="fld" style="top:821px;color:#aaa">[Master Model]</div>
<div class="pl" style="top:841px">UID:</div><div class="fld" style="top:838px">chassis 76</div>
<svg class="abs" style="left:590px;top:824px" width="10" height="10"><path d="M1 3L4 6L7 3" fill="none" stroke="#444" stroke-width="1.200"/></svg>
<svg class="abs" style="left:94px;top:860px" width="6" height="6"><path d="M0 1H5L2.500 4.500Z" fill="#222"/></svg>
<div class="abs" style="left:106px;top:858px;font-size:9.500px;font-weight:bold;color:#444">Position</div>
<div class="abs" style="left:608px;top:770px;width:9px;height:100px;background:#f3f3f3;border-left:1px solid #e4e4e4"></div>
<div class="abs" style="left:608px;top:780px;width:9px;height:52px;background:#fafafa;border:1px solid #dedede"></div>
<svg class="abs" style="left:609px;top:772px" width="8" height="6"><path d="M1 4L3.500 1.500L6 4" fill="none" stroke="#444"/></svg>

<!-- black bars on top -->
<div class="abs" style="left:0;top:109px;width:87px;height:761px;background:#000"></div>
<div class="abs" style="left:1716px;top:109px;width:67px;height:761px;background:#000"></div>
</div>
</body></html>
